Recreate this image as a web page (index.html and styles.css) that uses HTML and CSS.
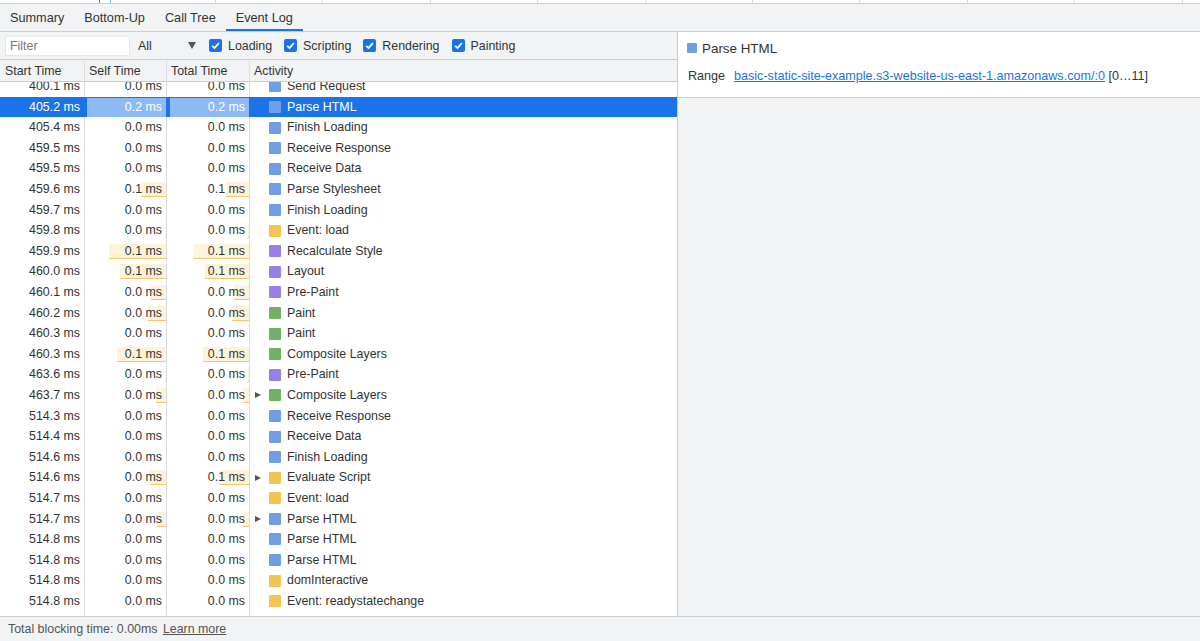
FILE: index.html
```html
<!DOCTYPE html>
<html lang="en">
<head>
  <meta charset="UTF-8">
  <title>Performance - Event Log</title>
  <link rel="stylesheet" href="styles.css">
</head>
<body>

  <!-- timeline overview remnant -->
  <div class="ruler">
    <span class="ruler-lead"></span>
    <span class="tick"></span>
    <span class="ruler-gap"></span>
    <span class="tick blue"></span>
    <span class="ruler-pad"></span>
    <span class="ruler-cell"></span>
    <span class="ruler-cell"></span>
    <span class="ruler-cell"></span>
    <span class="ruler-cell"></span>
    <span class="ruler-cell"></span>
    <span class="ruler-cell"></span>
    <span class="ruler-cell"></span>
    <span class="ruler-cell"></span>
    <span class="ruler-cell"></span>
    <span class="ruler-cell"></span>
  </div>

  <!-- Tabs -->
  <nav class="tabs">
    <span class="tab">Summary</span>
    <span class="tab">Bottom-Up</span>
    <span class="tab">Call Tree</span>
    <span class="tab active">Event Log</span>
  </nav>

  <div class="main">
    <section class="left">
      <div class="toolbar">
        <div class="filter">Filter</div>
        <div class="select">
          <span>All</span>
          <svg width="8" height="7" viewBox="0 0 8 7"><path d="M0 0h8L4 7z" fill="#555"/></svg>
        </div>
        <label class="check first"><span class="box"><svg width="13" height="13" viewBox="0 0 13 13"><path d="M3.2 6.8l2.3 2.3 4.4-5" fill="none" stroke="#fff" stroke-width="1.7"/></svg></span>Loading</label>
        <label class="check"><span class="box"><svg width="13" height="13" viewBox="0 0 13 13"><path d="M3.2 6.8l2.3 2.3 4.4-5" fill="none" stroke="#fff" stroke-width="1.7"/></svg></span>Scripting</label>
        <label class="check"><span class="box"><svg width="13" height="13" viewBox="0 0 13 13"><path d="M3.2 6.8l2.3 2.3 4.4-5" fill="none" stroke="#fff" stroke-width="1.7"/></svg></span>Rendering</label>
        <label class="check"><span class="box"><svg width="13" height="13" viewBox="0 0 13 13"><path d="M3.2 6.8l2.3 2.3 4.4-5" fill="none" stroke="#fff" stroke-width="1.7"/></svg></span>Painting</label>
      </div>

      <div class="grid-head">
        <span>Start Time</span>
        <span>Self Time</span>
        <span>Total Time</span>
        <span>Activity</span>
      </div>

      <div class="list">
        <div class="rows" id="rows"></div>
      </div>
    </section>

    <aside class="right">
      <div class="details">
        <div class="details-title"><span class="swatch load"></span>Parse HTML</div>
        <div class="details-row">
          <span class="details-label">Range</span>
          <a class="link">basic-static-site-example.s3-website-us-east-1.amazonaws.com/:0</a>
          <span>&nbsp;[0…11]</span>
        </div>
      </div>
    </aside>
  </div>

  <footer class="status">
    Total blocking time: 0.00ms <a class="learn">Learn more</a>
  </footer>

  <script>
    // start, self, total, activity, category, has children, self bar px, total bar px
    const events = [
      ['400.1 ms', '0.0 ms', '0.0 ms', 'Send Request', 'load', 0, 0, 0],
      ['405.2 ms', '0.2 ms', '0.2 ms', 'Parse HTML', 'load', 0, 79, 79],
      ['405.4 ms', '0.0 ms', '0.0 ms', 'Finish Loading', 'load', 0, 0, 0],
      ['459.5 ms', '0.0 ms', '0.0 ms', 'Receive Response', 'load', 0, 0, 0],
      ['459.5 ms', '0.0 ms', '0.0 ms', 'Receive Data', 'load', 0, 0, 0],
      ['459.6 ms', '0.1 ms', '0.1 ms', 'Parse Stylesheet', 'load', 0, 25, 23],
      ['459.7 ms', '0.0 ms', '0.0 ms', 'Finish Loading', 'load', 0, 0, 0],
      ['459.8 ms', '0.0 ms', '0.0 ms', 'Event: load', 'script', 0, 1, 1],
      ['459.9 ms', '0.1 ms', '0.1 ms', 'Recalculate Style', 'render', 0, 57, 55],
      ['460.0 ms', '0.1 ms', '0.1 ms', 'Layout', 'render', 0, 46, 44],
      ['460.1 ms', '0.0 ms', '0.0 ms', 'Pre-Paint', 'render', 0, 15, 15],
      ['460.2 ms', '0.0 ms', '0.0 ms', 'Paint', 'paint', 0, 18, 17],
      ['460.3 ms', '0.0 ms', '0.0 ms', 'Paint', 'paint', 0, 0, 0],
      ['460.3 ms', '0.1 ms', '0.1 ms', 'Composite Layers', 'paint', 0, 49, 46],
      ['463.6 ms', '0.0 ms', '0.0 ms', 'Pre-Paint', 'render', 0, 1, 1],
      ['463.7 ms', '0.0 ms', '0.0 ms', 'Composite Layers', 'paint', 1, 10, 6],
      ['514.3 ms', '0.0 ms', '0.0 ms', 'Receive Response', 'load', 0, 0, 0],
      ['514.4 ms', '0.0 ms', '0.0 ms', 'Receive Data', 'load', 0, 0, 0],
      ['514.6 ms', '0.0 ms', '0.0 ms', 'Finish Loading', 'load', 0, 0, 0],
      ['514.6 ms', '0.0 ms', '0.1 ms', 'Evaluate Script', 'script', 1, 16, 30],
      ['514.7 ms', '0.0 ms', '0.0 ms', 'Event: load', 'script', 0, 0, 0],
      ['514.7 ms', '0.0 ms', '0.0 ms', 'Parse HTML', 'load', 1, 9, 6],
      ['514.8 ms', '0.0 ms', '0.0 ms', 'Parse HTML', 'load', 0, 0, 0],
      ['514.8 ms', '0.0 ms', '0.0 ms', 'Parse HTML', 'load', 0, 0, 0],
      ['514.8 ms', '0.0 ms', '0.0 ms', 'domInteractive', 'script', 0, 0, 0],
      ['514.8 ms', '0.0 ms', '0.0 ms', 'Event: readystatechange', 'script', 0, 0, 0],
      ['', '', '', '', 'script', 0, 1, 1]
    ];
    const selectedIndex = 1;

    function timeCell(text, barWidth) {
      const cell = document.createElement('div');
      cell.className = 'num';
      if (barWidth) {
        const bar = document.createElement('span');
        bar.className = 'bar';
        bar.style.width = barWidth + 'px';
        cell.appendChild(bar);
      }
      const label = document.createElement('span');
      label.className = 'num-text';
      label.textContent = text;
      cell.appendChild(label);
      return cell;
    }

    const list = document.getElementById('rows');
    events.forEach((ev, i) => {
      const row = document.createElement('div');
      row.className = 'row' + (i === selectedIndex ? ' selected' : '');

      const start = document.createElement('div');
      start.className = 'num';
      start.textContent = ev[0];
      row.appendChild(start);
      row.appendChild(timeCell(ev[1], ev[6]));
      row.appendChild(timeCell(ev[2], ev[7]));

      const activity = document.createElement('div');
      activity.className = 'activity';
      activity.innerHTML =
        '<span class="toggle' + (ev[5] ? ' closed' : '') + '"></span>' +
        '<span class="swatch ' + ev[4] + '"></span>' +
        '<span>' + ev[3] + '</span>';
      row.appendChild(activity);

      list.appendChild(row);
    });
  </script>

</body>
</html>
```

FILE: styles.css
```css
* {
  box-sizing: border-box;
}

body {
  margin: 0;
  height: 641px;
  overflow: hidden;
  display: flex;
  flex-direction: column;
  font-family: "Liberation Sans", Arial, sans-serif;
  font-size: 12.4px;
  color: #333;
  background: #f1f3f4;
}

/* timeline strip */
.ruler {
  height: 4px;
  display: flex;
  overflow: hidden;
  background: #fff;
  border-bottom: 1px solid #cacdd1;
}

.ruler span {
  flex-shrink: 0;
}

.ruler-lead {
  width: 99px;
}

.tick {
  width: 1px;
  background: #777;
}

.tick.blue {
  background: #8ab4f8;
}

.ruler-gap {
  width: 10px;
}

.ruler-pad {
  width: 104px;
}

.ruler-cell {
  width: 107.4px;
  border-left: 1px solid #dadce0;
}

/* tabs */
.tabs {
  height: 28px;
  display: flex;
  border-bottom: 1px solid #cacdd1;
  font-size: 12.7px;
}

.tab {
  padding: 1px 10px 0;
  line-height: 26px;
}

.tab.active {
  box-shadow: inset 0 -2px #1a73e8;
}

.main {
  flex: 1;
  min-height: 0;
  display: flex;
}

.left {
  width: 678px;
  border-right: 1px solid #cacdd1;
  display: flex;
  flex-direction: column;
}

/* toolbar */
.toolbar {
  height: 28px;
  display: flex;
  align-items: center;
  padding-left: 5px;
  border-bottom: 1px solid #cacdd1;
}

.filter {
  width: 125px;
  height: 20px;
  line-height: 18px;
  padding-left: 4px;
  background: #fff;
  border: 1px solid #e6e7e9;
  color: #777;
}

.select {
  width: 58px;
  margin-left: 8px;
  display: flex;
  align-items: center;
  justify-content: space-between;
}

.check {
  display: flex;
  align-items: center;
  margin-left: 12px;
}

.check.first {
  margin-left: 13px;
}

.box {
  width: 13px;
  height: 13px;
  margin-right: 6px;
  border-radius: 2px;
  background: #1a73e8;
  display: flex;
}

/* table */
.grid-head,
.row {
  display: grid;
  grid-template-columns: 85px 82px 83px 1fr;
}

.grid-head {
  height: 22px;
  padding-top: 1px;
  line-height: 21px;
  border-bottom: 1px solid #cacdd1;
}

.grid-head span {
  padding-left: 4px;
  border-right: 1px solid #dadce0;
}

.grid-head span:first-child {
  padding-left: 5px;
}

.grid-head span:last-child {
  border-right: none;
}

.list {
  flex: 1;
  overflow: hidden;
  background: #fff;
}

.rows {
  margin-top: -5.9px;
}

.row {
  height: 20.6px;
  line-height: 20.6px;
}

.num {
  position: relative;
  text-align: right;
  padding-right: 4px;
  border-right: 1px solid #dadce0;
  white-space: nowrap;
}

.num-text {
  position: relative;
}

.bar {
  position: absolute;
  right: 0;
  top: 3px;
  height: 15px;
  background: #fdf2da;
  border-bottom: 1px solid #f3c66c;
}

.row.selected {
  background: #1a73e8;
  color: #fff;
}

.row.selected .num {
  border-right-color: #1a73e8;
}

.row.selected .bar {
  top: 1px;
  height: 19px;
  background: rgba(255, 255, 255, 0.5);
  border-bottom: none;
}

.activity {
  display: flex;
  align-items: center;
  padding-left: 5px;
  white-space: nowrap;
}

.toggle {
  width: 14px;
  height: 8px;
}

.toggle.closed {
  width: 0;
  height: 0;
  margin-right: 8px;
  border-left: 6px solid #555;
  border-top: 3.5px solid transparent;
  border-bottom: 3.5px solid transparent;
}

.swatch {
  width: 12px;
  height: 12px;
  margin-right: 6px;
  border-radius: 1px;
  flex-shrink: 0;
}

.swatch.load {
  background: #6f9ee6;
}

.swatch.script {
  background: #f1c453;
}

.swatch.render {
  background: #9a7fe6;
}

.swatch.paint {
  background: #72b066;
}

/* details pane */
.right {
  flex: 1;
  display: flex;
  flex-direction: column;
}

.details {
  height: 66px;
  padding: 8px 0 0 9px;
  background: #fff;
  border-bottom: 1px solid #cacdd1;
}

.details-title {
  height: 16px;
  display: flex;
  align-items: center;
  font-size: 13.4px;
}

.details-title .swatch {
  width: 10px;
  height: 10px;
  margin-right: 5px;
}

.details-row {
  margin: 13px 0 0 1px;
  display: flex;
  font-size: 12.6px;
  white-space: nowrap;
}

.details-label {
  width: 46px;
}

.link {
  color: #1a73e8;
  text-decoration: underline;
}

/* status bar */
.status {
  height: 25px;
  line-height: 24px;
  padding-left: 8px;
  border-top: 1px solid #cacdd1;
  color: #555;
}

.learn {
  margin-left: 2px;
  text-decoration: underline;
}
```
